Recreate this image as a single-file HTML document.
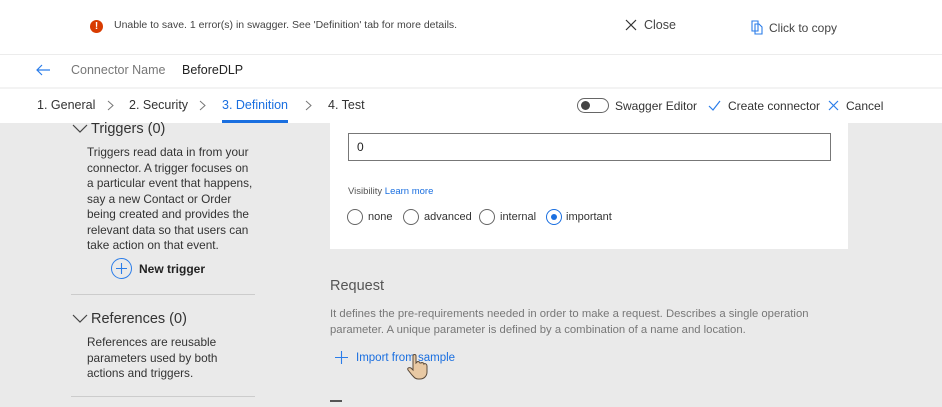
<!DOCTYPE html>
<html><head><meta charset="utf-8"><style>
*{margin:0;padding:0;box-sizing:border-box}
body{width:942px;height:407px;overflow:hidden;background:#eaeaea;font-family:"Liberation Sans",sans-serif;color:#323130;position:relative}
.a{position:absolute;white-space:nowrap}
</style></head><body>
<div class="a" style="left:0;top:0;width:942px;height:123px;background:#fff"></div>
<div class="a" style="left:0;top:54px;width:942px;height:1px;background:#ececec"></div>
<div class="a" style="left:0;top:87px;width:942px;height:2px;background:#f3f3f3"></div>
<!-- banner -->
<div class="a" style="left:90px;top:20px;width:13px;height:13px;border-radius:50%;background:#d83b01;color:#fff;font-size:10px;font-weight:bold;text-align:center;line-height:13px">!</div>
<div class="a" style="left:114px;top:19px;font-size:10.5px;color:#444">Unable to save. 1 error(s) in swagger. See 'Definition' tab for more details.</div>
<svg class="a" style="left:625px;top:19px" width="12" height="12"><path d="M1 1L11 11M11 1L1 11" stroke="#333" stroke-width="1.2"/></svg>
<div class="a" style="left:644px;top:18px;font-size:12.5px;color:#444">Close</div>
<svg class="a" style="left:751px;top:20px" width="12" height="15"><path d="M1 1h6v10H1z M4 4h4l3 3v7H4z" fill="none" stroke="#2b7de9" stroke-width="1.1"/></svg>
<div class="a" style="left:769px;top:21px;font-size:12px;color:#444">Click to copy</div>
<!-- connector row -->
<svg class="a" style="left:36px;top:64px" width="15" height="12"><path d="M14 6H1M6 1L1 6l5 5" fill="none" stroke="#2b7de9" stroke-width="1.2"/></svg>
<div class="a" style="left:71px;top:63px;font-size:12.5px;color:#777">Connector Name</div>
<div class="a" style="left:182px;top:63px;font-size:12.5px;color:#222">BeforeDLP</div>
<!-- tabs -->
<div class="a" style="left:37px;top:98px;font-size:12.5px;color:#333">1. General</div>
<svg class="a" style="left:107px;top:100px" width="7" height="11"><path d="M1 1l5 4.5L1 10" fill="none" stroke="#777"/></svg>
<div class="a" style="left:129px;top:98px;font-size:12.5px;color:#333">2. Security</div>
<svg class="a" style="left:199px;top:100px" width="7" height="11"><path d="M1 1l5 4.5L1 10" fill="none" stroke="#777"/></svg>
<div class="a" style="left:222px;top:98px;font-size:12.5px;color:#1a6fe0">3. Definition</div>
<div class="a" style="left:222px;top:120px;width:66px;height:3px;background:#1a6fe0"></div>
<svg class="a" style="left:305px;top:100px" width="7" height="11"><path d="M1 1l5 4.5L1 10" fill="none" stroke="#777"/></svg>
<div class="a" style="left:328px;top:98px;font-size:12.5px;color:#333">4. Test</div>
<div class="a" style="left:577px;top:98px;width:32px;height:15px;border:1px solid #666;border-radius:8px"></div>
<div class="a" style="left:581px;top:101px;width:9px;height:9px;border-radius:50%;background:#444"></div>
<div class="a" style="left:615px;top:99px;font-size:12px;color:#333">Swagger Editor</div>
<svg class="a" style="left:708px;top:100px" width="13" height="11"><path d="M1 6l4 4 7-9" fill="none" stroke="#2b7de9" stroke-width="1.2"/></svg>
<div class="a" style="left:728px;top:99px;font-size:12px;color:#333">Create connector</div>
<svg class="a" style="left:828px;top:100px" width="11" height="11"><path d="M1 1L10 10M10 1L1 10" stroke="#2b7de9" stroke-width="1.2"/></svg>
<div class="a" style="left:846px;top:99px;font-size:12px;color:#333">Cancel</div>
<!-- left panel -->
<svg class="a" style="left:72px;top:124px" width="16" height="10"><path d="M1 1l7 7 7-7" fill="none" stroke="#444" stroke-width="1.2"/></svg>
<div class="a" style="left:91px;top:121px;font-size:14.5px;color:#333">Triggers (0)</div>
<div class="a" style="left:87px;top:145px;font-size:11.8px;line-height:15.5px;color:#333">Triggers read data in from your<br>connector. A trigger focuses on<br>a particular event that happens,<br>say a new Contact or Order<br>being created and provides the<br>relevant data so that users can<br>take action on that event.</div>
<div class="a" style="left:111px;top:258px;width:21px;height:21px;border:1px solid #2b7de9;border-radius:50%"></div>
<svg class="a" style="left:115px;top:262px" width="13" height="13"><path d="M6.5 1v11M1 6.5h11" stroke="#2b7de9" stroke-width="1.1"/></svg>
<div class="a" style="left:139px;top:262px;font-size:12px;font-weight:bold;color:#222">New trigger</div>
<div class="a" style="left:71px;top:294px;width:184px;height:1px;background:#ccc"></div>
<svg class="a" style="left:72px;top:314px" width="16" height="10"><path d="M1 1l7 7 7-7" fill="none" stroke="#444" stroke-width="1.2"/></svg>
<div class="a" style="left:91px;top:311px;font-size:14.5px;color:#333">References (0)</div>
<div class="a" style="left:87px;top:335px;font-size:11.8px;line-height:15.5px;color:#333">References are reusable<br>parameters used by both<br>actions and triggers.</div>
<div class="a" style="left:71px;top:396px;width:184px;height:1px;background:#ccc"></div>
<!-- card -->
<div class="a" style="left:330px;top:123px;width:518px;height:126px;background:#fff"></div>
<div class="a" style="left:348px;top:133px;width:483px;height:28px;border:1px solid #777"></div>
<div class="a" style="left:357px;top:140px;font-size:12px;color:#222">0</div>
<div class="a" style="left:348px;top:186px;font-size:9.5px;color:#555">Visibility <span style="color:#1a6fe0">Learn more</span></div>
<div class="a" style="left:347px;top:209px;width:16px;height:16px;border:1px solid #666;border-radius:50%"></div>
<div class="a" style="left:368px;top:211px;font-size:11px;color:#333">none</div>
<div class="a" style="left:403px;top:209px;width:16px;height:16px;border:1px solid #666;border-radius:50%"></div>
<div class="a" style="left:424px;top:211px;font-size:11px;color:#333">advanced</div>
<div class="a" style="left:479px;top:209px;width:16px;height:16px;border:1px solid #666;border-radius:50%"></div>
<div class="a" style="left:500px;top:211px;font-size:11px;color:#333">internal</div>
<div class="a" style="left:546px;top:209px;width:16px;height:16px;border:1px solid #1a6fe0;border-radius:50%"></div>
<div class="a" style="left:551px;top:214px;width:6px;height:6px;background:#1a6fe0;border-radius:50%"></div>
<div class="a" style="left:566px;top:211px;font-size:11px;color:#333">important</div>
<!-- request -->
<div class="a" style="left:330px;top:278px;font-size:14.5px;color:#555">Request</div>
<div class="a" style="left:330px;top:306px;font-size:11.3px;line-height:16px;color:#777">It defines the pre-requirements needed in order to make a request. Describes a single operation<br>parameter. A unique parameter is defined by a combination of a name and location.</div>
<svg class="a" style="left:335px;top:351px" width="13" height="13"><path d="M6.5 0v13M0 6.5h13" stroke="#2b7de9" stroke-width="1.1"/></svg>
<div class="a" style="left:356px;top:352px;font-size:11.5px;color:#1a6fe0">Import from sample</div>
<svg class="a" style="left:405px;top:352px" width="24" height="28"><path d="M8 4c0-2 3-2 3 0v7l1-1c1-1 3 0 3 1l1 0c1-1 3 0 3 1 1-1 3 0 3 2v6c0 4-3 7-7 7h-2c-3 0-4-2-6-4l-4-5c-1-2 1-3 3-2l2 2z" fill="#e8c9a4" stroke="#5a4a3a" stroke-width="1"/></svg>
<div class="a" style="left:330px;top:400px;width:12px;height:2px;background:#555"></div>
</body></html>
